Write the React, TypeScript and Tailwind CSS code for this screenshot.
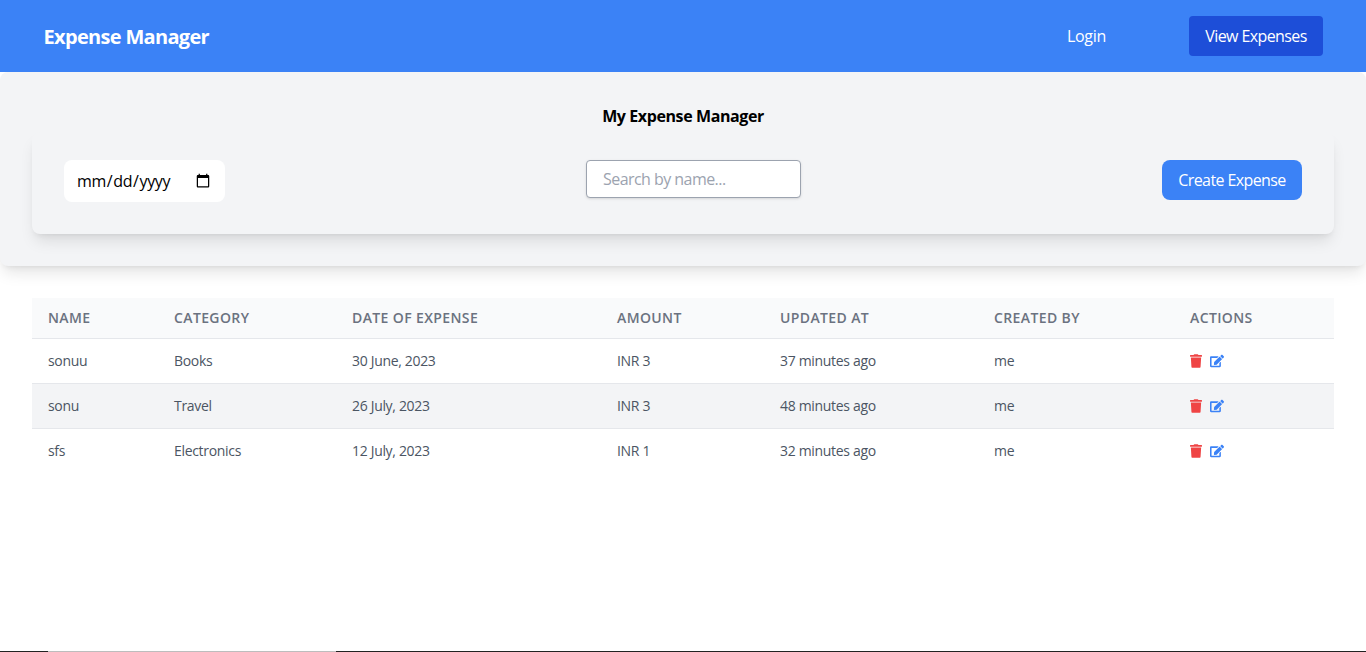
import { FaTrash, FaEdit } from "react-icons/fa";

const rows = [
  ["sonuu", "Books", "30 June, 2023", "INR 3", "37 minutes ago", "me"],
  ["sonu", "Travel", "26 July, 2023", "INR 3", "48 minutes ago", "me"],
  ["sfs", "Electronics", "12 July, 2023", "INR 1", "32 minutes ago", "me"],
];
const headers = ["NAME", "CATEGORY", "DATE OF EXPENSE", "AMOUNT", "UPDATED AT", "CREATED BY", "ACTIONS"];

export default function App() {
  return (
    <div className="h-[652px] overflow-hidden flex flex-col bg-white font-['Open_Sans','Noto_Sans',sans-serif]">
      <nav className="h-[72px] shrink-0 bg-[#3b82f6] flex items-center justify-between pl-[43.5px] pr-[43px] text-white">
        <span className="pt-[2px] text-[20px] font-bold tracking-[-0.68px]">Expense Manager</span>
        <div className="flex items-center gap-[83px]">
          <a className="text-[16px] tracking-[-0.3px]">Login</a>
          <button className="h-[40px] w-[134px] rounded bg-[#1d4ed8] text-[16px] tracking-[-0.6px] text-white">View Expenses</button>
        </div>
      </nav>
      <section className="h-[194px] shrink-0 rounded-lg bg-[#f3f4f6] shadow-lg px-8 pt-8">
        <h1 className="h-[28px] text-center text-[16px] leading-[24px] font-bold tracking-[-0.4px] text-black">My Expense Manager</h1>
        <div className="h-[102px] rounded-lg bg-[#f3f4f6] shadow-lg px-8 py-7 flex items-start justify-between">
          <input type="date" className="h-[42px] w-[161px] rounded-lg bg-white pl-3 pr-3 text-[16px] tracking-[-0.4px] text-black" />
          <input
            placeholder="Search by name..."
            className="h-[38px] w-[215px] rounded border border-[#9ca3af] bg-white px-4 text-[16px] tracking-[-0.55px] shadow-sm placeholder:text-[#9ca3af]"
          />
          <button className="h-[40px] w-[140px] rounded-lg bg-[#3b82f6] text-[16px] tracking-[-0.6px] text-white">Create Expense</button>
        </div>
      </section>
      <main className="flex-1 px-8 pt-8">
        <table className="w-[1302px] table-fixed border-collapse text-left">
          <colgroup>
            <col className="w-[126px]" />
            <col className="w-[178px]" />
            <col className="w-[265px]" />
            <col className="w-[163px]" />
            <col className="w-[214px]" />
            <col className="w-[196px]" />
            <col className="w-[160px]" />
          </colgroup>
          <thead>
            <tr className="h-[40px] bg-[#f9fafb] border-b border-[#e5e7eb]">
              {headers.map((h) => (
                <th key={h} className="px-4 text-[14px] font-semibold tracking-[0.38px] text-[#6b7280]">{h}</th>
              ))}
            </tr>
          </thead>
          <tbody>
            {rows.map((r, i) => (
              <tr key={r[0]} className={`h-[45px] text-[14px] tracking-[-0.32px] text-[#4b5563] ${i === 1 ? "bg-[#f3f4f6]" : "bg-white"} ${i < 2 ? "border-b border-[#e5e7eb]" : ""}`}>
                {r.map((c, j) => (
                  <td key={j} className="px-4">{c}</td>
                ))}
                <td className="px-4">
                  <div className="flex items-center gap-2">
                    <FaTrash className="h-[14px] w-[12px] text-[#ef4444]" />
                    <FaEdit className="h-[14px] w-[14px] text-[#3b82f6]" />
                  </div>
                </td>
              </tr>
            ))}
          </tbody>
        </table>
      </main>
      <div className="h-px shrink-0 flex bg-[#222]">
        <div className="ml-[48px] w-[288px] bg-[#bdbdbd]" />
      </div>
    </div>
  );
}
